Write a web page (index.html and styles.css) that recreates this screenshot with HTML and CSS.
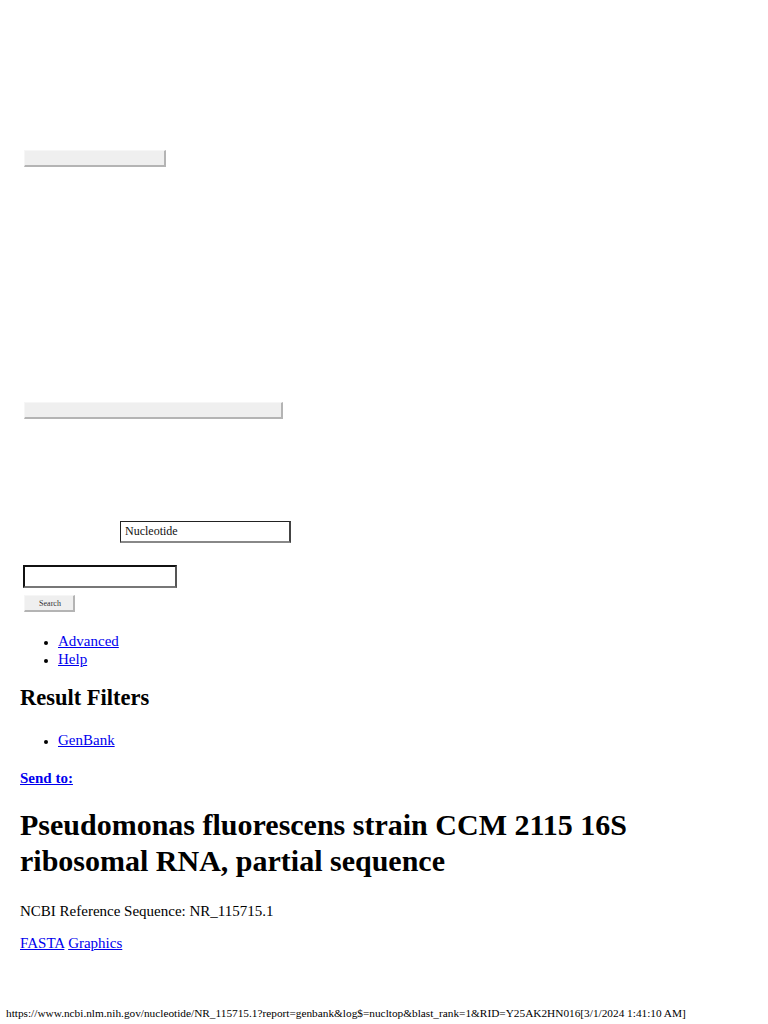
FILE: index.html
```
<!DOCTYPE html>
<html lang="en">
<head>
<meta charset="utf-8">
<title>Pseudomonas fluorescens strain CCM 2115 16S ribosomal RNA, partial sequence</title>
<link rel="stylesheet" href="styles.css">
</head>
<body>
<div class="page">
  <button class="bar bar-short" type="button"></button>
  <button class="bar bar-long" type="button"></button>
  <div class="db-select">Nucleotide</div>
  <input class="term" type="text" aria-label="Search term">
  <button class="search-btn" type="button">Search</button>
  <ul class="links first">
    <li><a href="#">Advanced</a></li>
    <li><a href="#">Help</a></li>
  </ul>
  <h2 class="filters">Result Filters</h2>
  <ul class="links genbank">
    <li><a href="#">GenBank</a></li>
  </ul>
  <a class="send" href="#">Send to:</a>
  <h1 class="title">Pseudomonas fluorescens strain CCM 2115 16S ribosomal RNA, partial sequence</h1>
  <p class="refseq">NCBI Reference Sequence: NR_115715.1</p>
  <p class="formats"><a href="#">FASTA</a> <a href="#">Graphics</a></p>
</div>
<div class="footer">https://www.ncbi.nlm.nih.gov/nucleotide/NR_115715.1?report=genbank&amp;log$=nucltop&amp;blast_rank=1&amp;RID=Y25AK2HN016[3/1/2024 1:41:10 AM]</div>
</body>
</html>
```

FILE: styles.css
```
html, body {
  margin: 0;
  padding: 0;
  background: #ffffff;
}
body {
  font-family: "Liberation Serif", "Times New Roman", serif;
  font-size: 15px;
  line-height: 18px;
  color: #000000;
  display: flex;
  flex-direction: column;
  align-items: flex-start;
  height: 1024px;
}
a {
  color: #0000ee;
  text-decoration: underline;
}
.page {
  display: flex;
  flex-direction: column;
  align-items: flex-start;
  padding: 0 20px;
}
.bar {
  appearance: none;
  box-sizing: border-box;
  display: block;
  height: 17px;
  margin: 150px 0 0 4px;
  padding: 0;
  background: #efefef;
  border-style: solid;
  border-width: 1px 2px 2px 1px;
  border-color: #f6f6f6 #b4b4b4 #b4b4b4 #f6f6f6;
}
.bar-short {
  width: 142px;
}
.bar-long {
  width: 259px;
  margin-top: 235px;
}
.db-select {
  box-sizing: border-box;
  width: 171px;
  height: 22px;
  margin: 102px 0 0 100px;
  padding: 0 4px;
  border: 1px solid #222;
  border-bottom: 2px solid #888;
  border-right: 2px solid #444;
  font-size: 12px;
  line-height: 19px;
  color: #111;
}
.term {
  appearance: none;
  box-sizing: border-box;
  width: 154px;
  height: 23px;
  margin: 22px 0 0 3px;
  padding: 0;
  border-style: solid;
  border-width: 2px;
  border-color: #111 #555 #777 #111;
  background: #ffffff;
}
.search-btn {
  appearance: none;
  box-sizing: border-box;
  width: 51px;
  height: 17px;
  margin: 7px 0 0 4px;
  padding: 0 0 0 2px;
  background: #efefef;
  border-style: solid;
  border-width: 1px 2px 2px 1px;
  border-color: #f6f6f6 #b4b4b4 #b4b4b4 #f6f6f6;
  font-family: "Liberation Serif", "Times New Roman", serif;
  font-size: 8px;
  line-height: 13px;
  color: #333;
}
.links {
  margin: 20px 0 0 0;
  padding: 0 0 0 38px;
  list-style: disc;
}
.links li {
  line-height: 18px;
}
.links li::marker {
  font-size: 12px;
}
.filters {
  margin: 16px 0 0 0;
  font-size: 22.5px;
  line-height: 27px;
  font-weight: bold;
}
.send {
  margin-top: 20px;
  font-weight: bold;
  line-height: 18px;
}
.title {
  margin: 20px 0 0 0;
  font-size: 30px;
  line-height: 36px;
  font-weight: bold;
  max-width: 640px;
}
.refseq {
  margin: 23px 0 0 0;
}
.formats {
  margin: 14px 0 0 0;
}
.footer {
  margin: 54px 0 0 6px;
  font-size: 11.3px;
  line-height: 14px;
  white-space: nowrap;
}
```
